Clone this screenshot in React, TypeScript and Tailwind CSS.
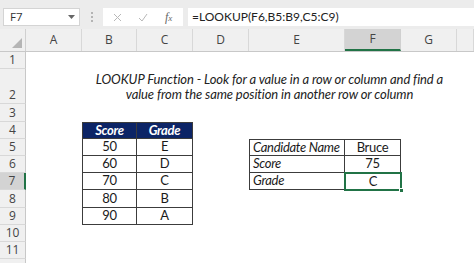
import React from "react";

const cols = ["A", "B", "C", "D", "E", "F", "G", "H"];
const widths = ["w-[56px]", "w-[55px]", "w-[56px]", "w-[56px]", "w-[96px]", "w-[56px]", "w-[56px]", "flex-1"];
const heights = ["h-[17px]", "h-[35px]", "h-[18px]", "h-[17px]", "h-[17px]", "h-[17px]", "h-[17px]", "h-[18px]", "h-[17px]", "h-[17px]", "h-[17px]", "h-[17px]"];

type Cell = { text: string; cls: string };

const tb = "border-[#3c3c3c]";
const cells: Record<string, Cell> = {
  B4: { text: "Score", cls: `bg-[#0c2466] text-white font-bold italic justify-center border-l border-t border-r border-b ${tb}` },
  C4: { text: "Grade", cls: `bg-[#0c2466] text-white font-bold italic justify-center border-t border-r border-b ${tb}` },
  E5: { text: "Candidate Name", cls: `italic justify-start pl-[3px] border-l border-t border-r border-b ${tb}` },
  F5: { text: "Bruce", cls: `justify-center border-t border-r border-b ${tb}` },
  E6: { text: "Score", cls: `italic justify-start pl-[3px] border-l border-r border-b ${tb}` },
  F6: { text: "75", cls: `justify-center border-r border-b ${tb}` },
  E7: { text: "Grade", cls: `italic justify-start pl-[3px] border-l border-r border-b ${tb}` },
  F7: { text: "C", cls: "justify-center relative outline-2 outline-[#217346] -outline-offset-1" },
};
const grades = [["50", "E"], ["60", "D"], ["70", "C"], ["80", "B"], ["90", "A"]];
grades.forEach(([s, g], i) => {
  const r = i + 5;
  cells["B" + r] = { text: s, cls: `justify-center border-l border-r border-b ${tb}` };
  cells["C" + r] = { text: g, cls: `justify-center border-r border-b ${tb}` };
});

export default function App() {
  return (
    <div className="w-[474px] h-[263px] overflow-hidden bg-white font-['Lato',sans-serif] text-[#1a1a1a]">
      {/* formula bar */}
      <div className="h-[29px] bg-[#ececec] flex items-start pt-[8px] font-['Open_Sans',sans-serif] text-[11.5px] text-[#333]">
        <div className="ml-[3px] w-[77px] h-[18px] bg-white border border-[#d4d4d4] flex items-center pl-[6px] justify-between pr-[4px]">
          <span>F7</span>
          <svg width="7" height="4" viewBox="0 0 7 4"><path d="M0 0h7L3.5 4z" fill="#666" /></svg>
        </div>
        <div className="w-[23px] h-[18px] flex flex-col items-center justify-center gap-[2px]">
          <div className="w-[2px] h-[2px] bg-[#b4b4b4]" />
          <div className="w-[2px] h-[2px] bg-[#b4b4b4]" />
          <div className="w-[2px] h-[2px] bg-[#b4b4b4]" />
        </div>
        <div className="w-[80px] h-[18px] bg-white flex items-center text-[#b8b8b8]">
          <svg className="ml-[10px]" width="9" height="9" viewBox="0 0 9 9"><path d="M1 1l7 7M8 1L1 8" stroke="#b8b8b8" strokeWidth="1" /></svg>
          <svg className="ml-[16px]" width="10" height="9" viewBox="0 0 10 9"><path d="M1 5l3 3 5-7" stroke="#b8b8b8" strokeWidth="1" fill="none" /></svg>
          <span className="ml-[17px] italic font-['Liberation_Serif',serif] text-[12px] text-[#666]">f<span className="text-[9px]">x</span></span>
        </div>
        <div className="ml-[5px] flex-1 h-[18px] bg-white flex items-center pl-[4px] text-[#222] font-['Lato',sans-serif] text-[12px]">
          =LOOKUP(F6,B5:B9,C5:C9)
        </div>
      </div>

      {/* column headers */}
      <div className="flex h-[23px] bg-[#f0f0f0] border-b border-[#c8c8c8] font-['Open_Sans',sans-serif] text-[12px] text-[#444]">
        <div className="w-[26px] border-r border-[#d0d0d0] relative">
          <svg className="absolute right-[3px] bottom-[3px]" width="10" height="10" viewBox="0 0 10 10"><path d="M10 0V10H0z" fill="#b5b5b5" /></svg>
        </div>
        {cols.map((c, i) => (
          <div
            key={c}
            className={`${widths[i]} flex items-center justify-center ${
              c === "F" ? "bg-[#d3d3d3] border-b-2 border-[#217346] border-r border-r-[#d0d0d0]" : "border-r border-[#d8d8d8]"
            }`}
          >
            {c === "H" ? "" : c}
          </div>
        ))}
      </div>

      {/* rows */}
      {heights.map((h, ri) => {
        const r = ri + 1;
        return (
          <div key={r} className={`flex ${h}`}>
            <div
              className={`w-[26px] shrink-0 flex items-end justify-center border-b border-[#d8d8d8] font-['Open_Sans',sans-serif] text-[12px] text-[#444] leading-[16px] ${
                r === 7 ? "bg-[#d3d3d3] border-r-2 border-r-[#217346]" : "bg-[#f0f0f0] border-r border-r-[#c8c8c8]"
              }`}
            >
              {r < 12 ? r : ""}
            </div>
            {r === 2 ? (
              <>
                <div className={widths[0]} />
                <div className="w-[375px] flex flex-col items-center justify-center italic text-[13px] tracking-[-0.1px] leading-[15px] text-[#222] pt-[1px]">
                  <span>LOOKUP Function - Look for a value in a row or column and find a</span>
                  <span>value from the same position in another row or column</span>
                </div>
                <div className="flex-1" />
              </>
            ) : (
              cols.map((c, i) => {
                const cell = cells[c + r];
                return (
                  <div
                    key={c}
                    className={`${widths[i]} shrink-0 flex items-center whitespace-nowrap text-[13px] tracking-[-0.3px] ${cell ? cell.cls : ""}`}
                  >
                    {cell?.text}
                    {c + r === "F7" && (
                      <div className="absolute right-[-3px] bottom-[-3px] w-[5px] h-[5px] bg-[#217346] border border-white" />
                    )}
                  </div>
                );
              })
            )}
          </div>
        );
      })}
    </div>
  );
}
